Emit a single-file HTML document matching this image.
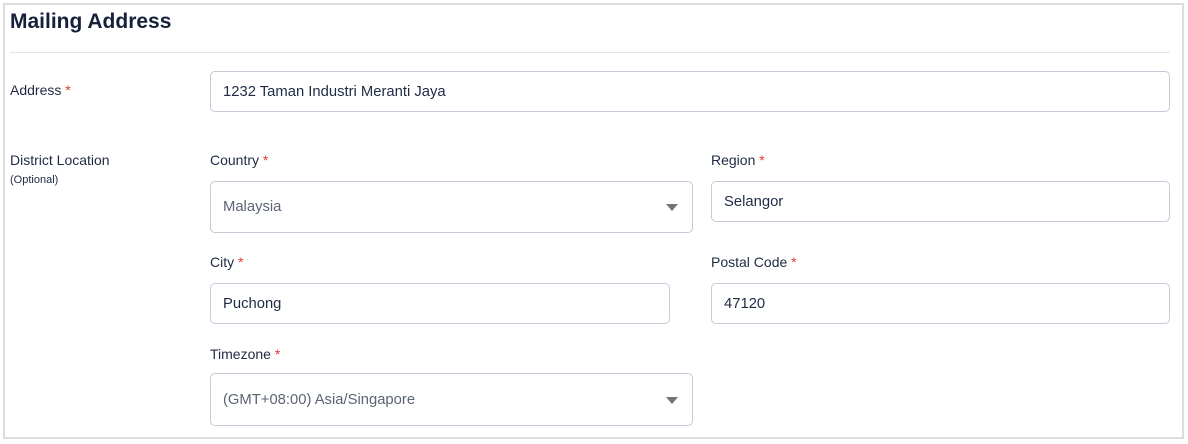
<!DOCTYPE html><html><head><style>
*{box-sizing:border-box;margin:0;padding:0}
body{width:1188px;height:444px;background:#fff;font-family:"Liberation Sans",sans-serif;color:#1c2540;position:relative;overflow:hidden}
.frame{position:absolute;left:3px;top:3px;width:1181px;height:436px;border:2px solid #dcdcdc}
h1{position:absolute;left:10px;top:10px;font-size:21px;font-weight:bold;color:#17213b}
.hr{position:absolute;left:10px;top:52px;width:1160px;height:1px;background:#e1e4ea}
.l{position:absolute;font-size:14px;color:#1f2a44}
.l b{color:#e53935;font-weight:normal}
.in{position:absolute;border:1px solid #c3cbd8;border-radius:5px;font-size:14.8px;padding-left:12px;display:flex;align-items:center;color:#1f2a44}
.sel{color:#5c6475}
.arr{position:absolute;right:14px;top:50%;margin-top:-3px;width:0;height:0;border-left:6px solid transparent;border-right:6px solid transparent;border-top:7px solid #6f737a}
</style></head><body>
<div class="frame"></div>
<h1>Mailing Address</h1>
<div class="hr"></div>
<div class="l" style="left:10px;top:82px">Address <b>*</b></div>
<div class="in" style="left:210px;top:71px;width:960px;height:41px">1232 Taman Industri Meranti Jaya</div>
<div class="l" style="left:10px;top:152px">District Location</div>
<div class="l" style="left:10px;top:174px;font-size:11px">(Optional)</div>
<div class="l" style="left:210px;top:152px">Country <b>*</b></div>
<div class="in sel" style="left:210px;top:181px;width:483px;height:52px">Malaysia<span class="arr"></span></div>
<div class="l" style="left:711px;top:152px">Region <b>*</b></div>
<div class="in" style="left:711px;top:181px;width:459px;height:41px">Selangor</div>
<div class="l" style="left:210px;top:254px">City <b>*</b></div>
<div class="in" style="left:210px;top:283px;width:460px;height:41px">Puchong</div>
<div class="l" style="left:711px;top:254px">Postal Code <b>*</b></div>
<div class="in" style="left:711px;top:283px;width:459px;height:41px">47120</div>
<div class="l" style="left:210px;top:346px">Timezone <b>*</b></div>
<div class="in sel" style="left:210px;top:373px;width:483px;height:53px">(GMT+08:00) Asia/Singapore<span class="arr"></span></div>
</body></html>
